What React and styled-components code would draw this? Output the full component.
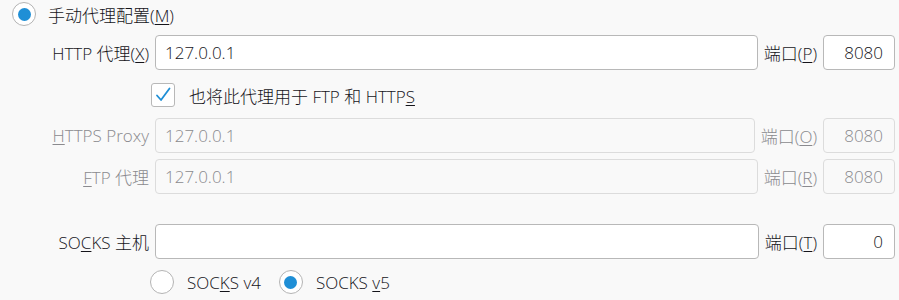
import styled, { createGlobalStyle } from "styled-components";

const GlobalStyle = createGlobalStyle`
  body {
    margin: 0;
    background: #f9f9f9;
    font-family: "Open Sans", "Noto Sans CJK SC", sans-serif;
    font-size: 17px;
    font-weight: 300;
    color: #15141a;
  }
`;

const Panel = styled.div`
  width: 899px;
  height: 300px;
  overflow: hidden;
  padding: 2px 4px 0 12px;
  box-sizing: border-box;
`;

const RadioLine = styled.label`
  display: flex;
  align-items: center;
  gap: 12px;
  height: 24px;
  white-space: nowrap;
`;

const RadioDot = styled.span`
  width: 24px;
  height: 24px;
  border-radius: 50%;
  border: 1px solid #b4b4b4;
  background: #fff;
  box-sizing: border-box;
  display: flex;
  align-items: center;
  justify-content: center;
  flex: none;

  &::after {
    content: "";
    width: 13px;
    height: 13px;
    border-radius: 50%;
    background: #1f8fd6;
    display: ${({ checked }) => (checked ? "block" : "none")};
  }
`;

const Row = styled.div`
  display: flex;
  align-items: center;
  height: 35px;
  margin-top: ${({ top }) => top}px;
  color: ${({ disabled }) => (disabled ? "#8a8a8e" : "#15141a")};
`;

const Label = styled.span`
  width: 137px;
  text-align: right;
  flex: none;
  margin-right: 6px;
  white-space: nowrap;
`;

const Field = styled.div`
  flex: 1;
  height: 100%;
  box-sizing: border-box;
  border: 1px solid ${({ disabled }) => (disabled ? "#dcdcdc" : "#b8b8b8")};
  border-radius: 4px;
  background: ${({ disabled }) => (disabled ? "#f9f9f9" : "#fff")};
  display: flex;
  align-items: center;
  padding: 0 9px;
  color: ${({ disabled }) => (disabled ? "#8a8a8e" : "#15141a")};
`;

const PortLabel = styled.span`
  margin: 0 6px;
  white-space: nowrap;
`;

const PortField = styled(Field)`
  flex: none;
  width: 72px;
  justify-content: flex-end;
  padding: 0 11px;
`;

const CheckLine = styled.label`
  display: flex;
  align-items: center;
  gap: 14px;
  height: 24px;
  margin-top: 13px;
  margin-left: 139px;
`;

const Box = styled.span`
  width: 24px;
  height: 24px;
  box-sizing: border-box;
  border: 1px solid #b8b8b8;
  border-radius: 3px;
  background: #fff;
  display: flex;
  align-items: center;
  justify-content: center;
`;

const OptionRow = styled.div`
  display: flex;
  align-items: center;
  gap: 18px;
  margin-top: 11px;
  margin-left: 138px;

  ${RadioLine} {
    gap: 13px;
  }
`;

const U = styled.u`
  text-underline-offset: 2px;
`;

function Check() {
  return (
    <svg width="18" height="18" viewBox="0 0 18 18">
      <path d="M3 9.5 L7 14 L15.5 2.5" fill="none" stroke="#1f8fd6" strokeWidth="1.8" strokeLinecap="round" strokeLinejoin="round" />
    </svg>
  );
}

function ProxyRow({ top, label, value, portLabel, port, disabled }) {
  return (
    <Row top={top} disabled={disabled}>
      <Label>{label}</Label>
      <Field disabled={disabled}>{value}</Field>
      <PortLabel>{portLabel}</PortLabel>
      <PortField disabled={disabled}>{port}</PortField>
    </Row>
  );
}

export default function App() {
  return (
    <>
      <GlobalStyle />
      <Panel>
        <RadioLine>
          <RadioDot checked />
          <span>手动代理配置(<U>M</U>)</span>
        </RadioLine>
        <ProxyRow
          top={9}
          label={<>HTTP 代理(<U>X</U>)</>}
          value="127.0.0.1"
          portLabel={<>端口(<U>P</U>)</>}
          port="8080"
        />
        <CheckLine>
          <Box><Check /></Box>
          <span>也将此代理用于 FTP 和 HTTP<U>S</U></span>
        </CheckLine>
        <ProxyRow
          top={11}
          disabled
          label={<><U>H</U>TTPS Proxy</>}
          value="127.0.0.1"
          portLabel={<>端口(<U>O</U>)</>}
          port="8080"
        />
        <ProxyRow
          top={6}
          disabled
          label={<><U>F</U>TP 代理</>}
          value="127.0.0.1"
          portLabel={<>端口(<U>R</U>)</>}
          port="8080"
        />
        <ProxyRow
          top={30}
          label={<>SO<U>C</U>KS 主机</>}
          value=""
          portLabel={<>端口(<U>T</U>)</>}
          port="0"
        />
        <OptionRow>
          <RadioLine>
            <RadioDot />
            <span>SOC<U>K</U>S v4</span>
          </RadioLine>
          <RadioLine>
            <RadioDot checked />
            <span>SOCKS <U>v</U>5</span>
          </RadioLine>
        </OptionRow>
      </Panel>
    </>
  );
}
